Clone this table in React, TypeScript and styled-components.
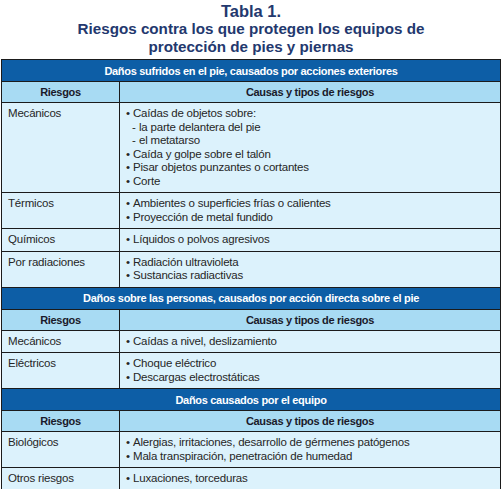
import React from "react";
import styled, { createGlobalStyle } from "styled-components";

const GlobalStyle = createGlobalStyle`
  html, body {
    margin: 0;
    padding: 0;
    background: #ffffff;
  }
  body {
    font-family: "Liberation Sans", Arial, sans-serif;
  }
`;

const Page = styled.div`
  width: 502px;
  height: 489px;
  background: #fff;
  overflow: hidden;
`;

const Title = styled.h1`
  margin: 0;
  padding-top: 2px;
  height: 59px;
  box-sizing: border-box;
  text-align: center;
  font-family: "Liberation Sans", Arial, sans-serif;
  font-weight: bold;
  line-height: 18px;
  color: #23386e;
`;

const TitleLine = styled.div<{ $big?: boolean }>`
  font-size: ${(p) => (p.$big ? "16.5px" : "15.2px")};
`;

const Table = styled.table`
  margin-left: 1px;
  width: 500px;
  border-collapse: collapse;
  table-layout: fixed;
  font-family: "Liberation Sans", Arial, sans-serif;
  font-size: 11.5px;
  letter-spacing: -0.2px;
  color: #262626;
  border: 1px solid #1b1b1b;
`;

const Band = styled.td`
  background: #0d5ea6;
  color: #fff;
  font-weight: bold;
  font-size: 11px;
  letter-spacing: -0.3px;
  text-align: center;
  height: 21px;
  padding: 0;
  border: 1px solid #1b1b1b;
  line-height: 14px;
`;

const HeadCell = styled.td`
  background: #a8dbf3;
  color: #1a1a2a;
  font-weight: bold;
  font-size: 11px;
  letter-spacing: -0.3px;
  text-align: center;
  height: 20px;
  padding: 0;
  border: 1px solid #1b1b1b;
`;

const Cell = styled.td`
  background: #dcf2fc;
  vertical-align: top;
  padding: 4px 6px;
  border: 1px solid #1b1b1b;
  line-height: 13.5px;
`;

const List = styled.ul`
  margin: 0;
  padding: 0;
  list-style: none;
`;

const Item = styled.li<{ $sub?: boolean }>`
  display: flex;
  padding-left: ${(p) => (p.$sub ? "6px" : "0")};

  &::before {
    content: "${(p) => (p.$sub ? "-" : "•")}";
    width: 7px;
    flex: none;
  }
`;

type Row = { name: string; items: { text: string; sub?: boolean }[] };
type Section = { title: string; rows: Row[] };

const sections: Section[] = [
  {
    title: "Daños sufridos en el pie, causados por acciones exteriores",
    rows: [
      {
        name: "Mecánicos",
        items: [
          { text: "Caídas de objetos sobre:" },
          { text: "la parte delantera del pie", sub: true },
          { text: "el metatarso", sub: true },
          { text: "Caída y golpe sobre el talón" },
          { text: "Pisar objetos punzantes o cortantes" },
          { text: "Corte" },
        ],
      },
      {
        name: "Térmicos",
        items: [
          { text: "Ambientes o superficies frías o calientes" },
          { text: "Proyección de metal fundido" },
        ],
      },
      { name: "Químicos", items: [{ text: "Líquidos o polvos agresivos" }] },
      {
        name: "Por radiaciones",
        items: [{ text: "Radiación ultravioleta" }, { text: "Sustancias radiactivas" }],
      },
    ],
  },
  {
    title: "Daños sobre las personas, causados por acción directa sobre el pie",
    rows: [
      { name: "Mecánicos", items: [{ text: "Caídas a nivel, deslizamiento" }] },
      {
        name: "Eléctricos",
        items: [{ text: "Choque eléctrico" }, { text: "Descargas electrostáticas" }],
      },
    ],
  },
  {
    title: "Daños causados por el equipo",
    rows: [
      {
        name: "Biológicos",
        items: [
          { text: "Alergias, irritaciones, desarrollo de gérmenes patógenos" },
          { text: "Mala transpiración, penetración de humedad" },
        ],
      },
      { name: "Otros riesgos", items: [{ text: "Luxaciones, torceduras" }] },
    ],
  },
];

const App = () => {
  return (
    <Page>
      <GlobalStyle />
      <Title>
        <TitleLine $big>Tabla 1.</TitleLine>
        <TitleLine>Riesgos contra los que protegen los equipos de</TitleLine>
        <TitleLine>protección de pies y piernas</TitleLine>
      </Title>
      <Table>
        <colgroup>
          <col style={{ width: 118 }} />
          <col />
        </colgroup>
        <tbody>
          {sections.map((section) => (
            <React.Fragment key={section.title}>
              <tr>
                <Band colSpan={2}>{section.title}</Band>
              </tr>
              <tr>
                <HeadCell>Riesgos</HeadCell>
                <HeadCell>Causas y tipos de riesgos</HeadCell>
              </tr>
              {section.rows.map((row) => (
                <tr key={section.title + row.name}>
                  <Cell>{row.name}</Cell>
                  <Cell>
                    <List>
                      {row.items.map((item) => (
                        <Item key={item.text} $sub={item.sub}>
                          {item.text}
                        </Item>
                      ))}
                    </List>
                  </Cell>
                </tr>
              ))}
            </React.Fragment>
          ))}
        </tbody>
      </Table>
    </Page>
  );
};

export default App;
